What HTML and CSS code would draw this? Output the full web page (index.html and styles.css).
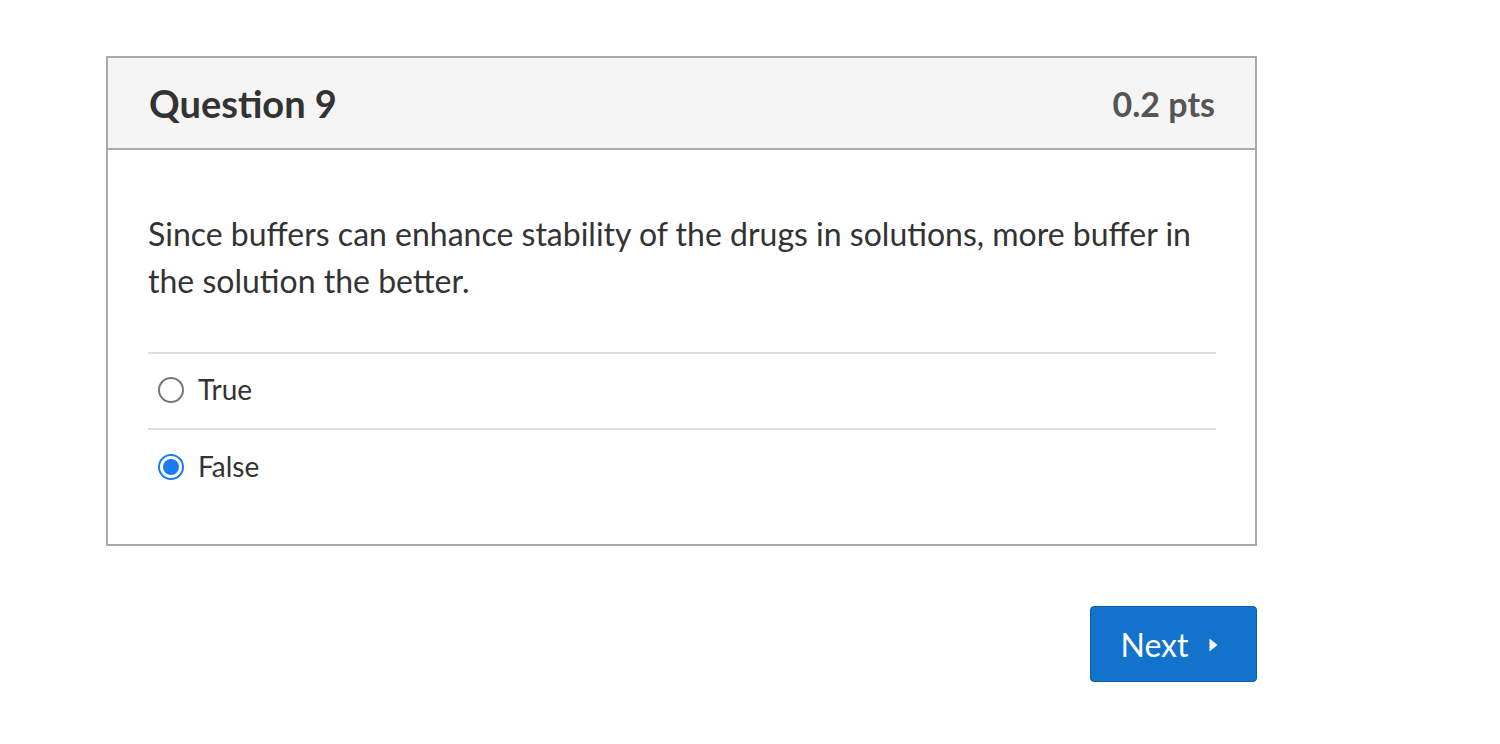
FILE: index.html
```html
<!DOCTYPE html>
<html>
<head>
<meta charset="utf-8">
<link rel="stylesheet" href="styles.css">
</head>
<body>
<div class="page">
  <div class="card">
    <div class="card-header">
      <h2 class="q-title">Question 9</h2>
      <span class="q-pts">0.2 pts</span>
    </div>
    <div class="card-body">
      <p class="q-text">Since buffers can enhance stability of the drugs in solutions, more buffer in the solution the better.</p>
      <div class="answers">
        <label class="answer">
          <span class="radio"></span>
          <span class="answer-text">True</span>
        </label>
        <label class="answer">
          <span class="radio checked"></span>
          <span class="answer-text">False</span>
        </label>
      </div>
    </div>
  </div>
  <div class="actions">
    <button class="next-btn">Next <svg class="caret" width="9" height="14" viewBox="0 0 9 14"><path d="M0.5 0.5 L8.5 7 L0.5 13.5 Z" fill="#fff"/></svg></button>
  </div>
</div>
</body>
</html>
```

FILE: styles.css
```css
* { box-sizing: border-box; }
html, body { margin: 0; padding: 0; background: #fff; }
body {
  font-family: Lato, "Open Sans", sans-serif;
  color: #2d3b45;
}
.page {
  padding: 56px 0 0 106px;
  width: 1257px;
}
.card {
  border: 2px solid #aaaaaa;
  width: 1151px;
}
.card-header {
  background: #f5f5f5;
  border-bottom: 2px solid #aaaaaa;
  height: 92px;
  padding: 0 40px 0 41px;
  display: flex;
  align-items: center;
  justify-content: space-between;
}
.q-title {
  margin: 0;
  font-size: 38px;
  font-weight: 700;
  color: #333;
}
.q-pts {
  font-size: 34px;
  font-weight: 700;
  color: #555;
}
.card-body {
  padding: 60px 39px 38px 40px;
}
.q-text {
  margin: 0 0 48px 0;
  font-size: 32px;
  line-height: 47px;
  color: #333;
}
.answers {
  border-top: 2px solid #ddd;
}
.answer {
  display: flex;
  align-items: center;
  height: 76px;
  padding: 0 0 4px 10px;
  border-bottom: 2px solid #ddd;
  font-size: 28px;
  color: #333;
}
.answer:last-child { border-bottom: none; height: 76px; }
.radio {
  width: 26px;
  height: 26px;
  border-radius: 50%;
  border: 2px solid #767676;
  margin-right: 14px;
  margin-top: 2px;
  flex: none;
  background: #fff;
}
.radio.checked {
  border-color: #1a7cf0;
  position: relative;
}
.radio.checked::after {
  content: "";
  position: absolute;
  left: 3px; top: 3px;
  width: 16px; height: 16px;
  border-radius: 50%;
  background: #1a7cf0;
}
.actions {
  display: flex;
  justify-content: flex-end;
  margin-top: 60px;
}
.next-btn {
  width: 167px;
  height: 76px;
  background: #1173cb;
  border: 1px solid #0c5ea8;
  border-radius: 4px;
  color: #fff;
  font-family: Lato, "Open Sans", sans-serif;
  font-size: 32px;
  display: flex;
  align-items: center;
  justify-content: center;
  gap: 20px;
  padding: 1px 9px 0 0;
}
.caret { margin-top: 1px; }
```
